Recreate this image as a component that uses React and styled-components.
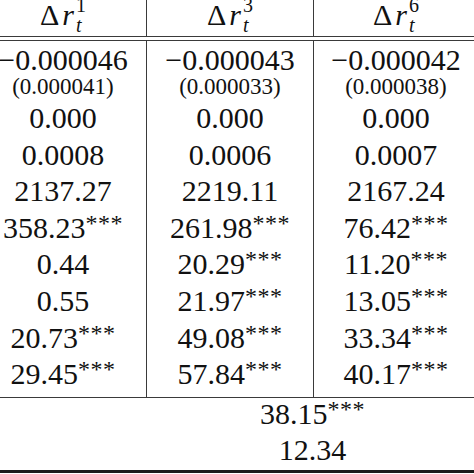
import React from 'react'
import styled, { createGlobalStyle } from 'styled-components'

const Global = createGlobalStyle`
  html, body {
    margin: 0;
    padding: 0;
    background: #fff;
    overflow: hidden;
  }
  body {
    font-family: "Liberation Serif", "Times New Roman", "DejaVu Serif", serif;
    color: #111;
  }
`

const LINE = '#3a3a3a'

const Table = styled.div`
  width: 498px;
  margin-left: -20px;
  font-family: "Liberation Serif", "Times New Roman", "DejaVu Serif", serif;
`

const Grid = styled.div`
  display: grid;
  grid-template-columns: 167px 167px 164px;
`

const HeadCell = styled.div`
  height: 36px;
  display: flex;
  align-items: center;
  justify-content: center;
  border-right: ${p => (p.$last ? 'none' : `1.5px solid ${LINE}`)};
  font-size: 30px;
  line-height: 30px;
`

const DoubleRule = styled.div`
  height: 3px;
  border-top: 1.5px solid ${LINE};
  border-bottom: 1.5px solid ${LINE};
`

const Rule = styled.div`
  height: 0;
  border-top: 1.5px solid ${LINE};
`

const Column = styled.div`
  display: flex;
  flex-direction: column;
  align-items: center;
  padding-bottom: 4px;
  border-right: ${p => (p.$last ? 'none' : `1.5px solid ${LINE}`)};
`

const MainLine = styled.div`
  height: 37px;
  line-height: 37px;
  font-size: 30px;
  white-space: nowrap;
`

const SeLine = styled.div`
  height: 17px;
  line-height: 17px;
  font-size: 23px;
  margin-bottom: 5px;
  white-space: nowrap;
`

const Row = styled.div`
  height: 36.6px;
  line-height: 36.6px;
  font-size: 30px;
  white-space: nowrap;
`

const Stars = styled.span`
  font-size: 24px;
  letter-spacing: 0.5px;
  position: relative;
  top: -7px;
`

const Delta = styled.span`
  margin-right: 2px;
`

const Var = styled.span`
  font-style: italic;
  margin-left: 1px;
`

const Scripts = styled.span`
  display: inline-flex;
  flex-direction: column;
  align-items: flex-start;
  vertical-align: middle;
  font-size: 20px;
  line-height: 20px;
  margin-left: 2px;
  position: relative;
  top: -3.5px;
`

const Sub = styled.span`
  font-style: italic;
`

const Foot = styled.div`
  display: grid;
  grid-template-columns: 167px 331px;
  border-bottom: 3px solid #1c1c1c;
`

const FootCell = styled.div`
  grid-column: 2;
  display: flex;
  flex-direction: column;
  align-items: center;
`

const FootRow = styled.div`
  height: ${p => p.$h}px;
  line-height: ${p => p.$h}px;
  font-size: 30px;
  white-space: nowrap;
`

const Value = ({ v }) => {
  const stars = v.endsWith('***')
  const num = stars ? v.slice(0, -3) : v
  return (
    <>
      {num}
      {stars && <Stars>***</Stars>}
    </>
  )
}

const Head = ({ sup }) => (
  <span>
    <Delta>Δ</Delta>
    <Var>r</Var>
    <Scripts>
      <span>{sup}</span>
      <Sub>t</Sub>
    </Scripts>
  </span>
)

const columns = [
  {
    sup: '1',
    mean: '−0.000046',
    se: '(0.000041)',
    rows: ['0.000', '0.0008', '2137.27', '358.23***', '0.44', '0.55', '20.73***', '29.45***'],
  },
  {
    sup: '3',
    mean: '−0.000043',
    se: '(0.000033)',
    rows: ['0.000', '0.0006', '2219.11', '261.98***', '20.29***', '21.97***', '49.08***', '57.84***'],
  },
  {
    sup: '6',
    mean: '−0.000042',
    se: '(0.000038)',
    rows: ['0.000', '0.0007', '2167.24', '76.42***', '11.20***', '13.05***', '33.34***', '40.17***'],
  },
]

export default function App() {
  return (
    <>
      <Global />
      <Table>
        <Grid>
          {columns.map((c, i) => (
            <HeadCell key={c.sup} $last={i === 2}>
              <Head sup={c.sup} />
            </HeadCell>
          ))}
        </Grid>
        <DoubleRule />
        <Grid>
          {columns.map((c, i) => (
            <Column key={c.sup} $last={i === 2}>
              <MainLine>{c.mean}</MainLine>
              <SeLine>{c.se}</SeLine>
              {c.rows.map((r, j) => (
                <Row key={j}>
                  <Value v={r} />
                </Row>
              ))}
            </Column>
          ))}
        </Grid>
        <Rule />
        <Foot>
          <FootCell>
            <FootRow $h={31}>
              <Value v="38.15***" />
            </FootRow>
            <FootRow $h={41}>12.34</FootRow>
          </FootCell>
        </Foot>
      </Table>
    </>
  )
}
